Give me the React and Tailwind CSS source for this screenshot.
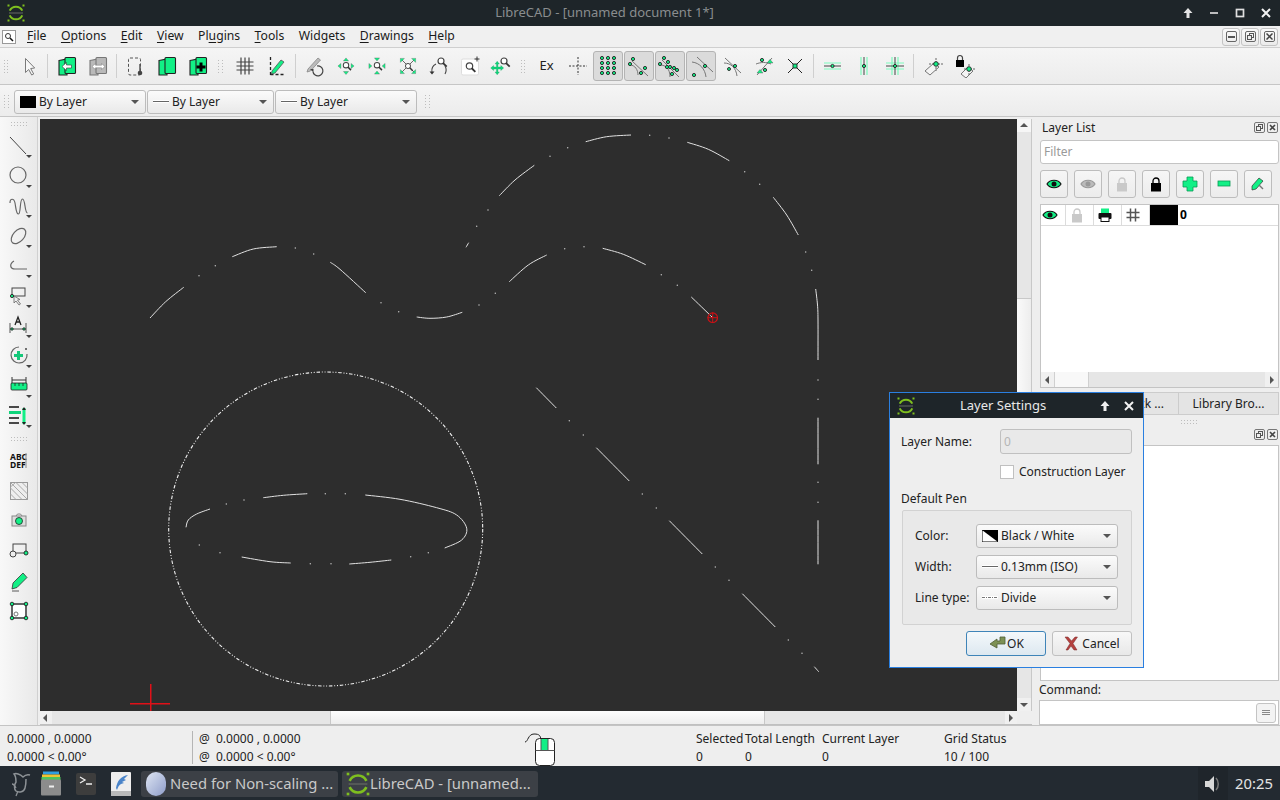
import React from "react";

const G = "#12f086";

function Ico({ s = 24, children }) {
  return (
    <svg width={s} height={s} viewBox="0 0 24 24" fill="none" className="block shrink-0">
      {children}
    </svg>
  );
}

const Dot = ({ x, y, r = 1.6 }) => <circle cx={x} cy={y} r={r} fill={G} stroke="#222" strokeWidth="0.9" />;

const Mag = ({ x = 12, y = 10, r = 3.2 }) => (
  <g>
    <circle cx={x} cy={y} r={r} fill="#fff" stroke="#444" strokeWidth="1.2" />
    <path d={`M${x + r * 0.7} ${y + r * 0.7}l3.6 3.6`} stroke="#333" strokeWidth="1.8" />
  </g>
);

const Pages = ({ fill = G, line = "#222", children }) => (
  <Ico>
    <path d="M4 6.5l8 -1.500v16l-8 0z" fill={fill} stroke={line} strokeWidth="1.1" />
    <rect x="10" y="3.5" width="10.5" height="16" rx="1" fill={fill} stroke={line} strokeWidth="1.1" />
    {children}
  </Ico>
);

const Logo = ({ s = 18 }) => (
  <svg width={s} height={s} viewBox="0 0 18 18" fill="none" className="block shrink-0">
    <path d="M2.7 6.6A7 7 0 0 1 15.3 6.6" stroke="#7fbf1f" strokeWidth="2" />
    <path d="M2.7 11.4A7 7 0 0 0 15.3 11.4" stroke="#7fbf1f" strokeWidth="2" />
    <path d="M2 9h14" stroke="#5b5f5c" strokeWidth="1.2" />
    <rect x="0.5" y="0.5" width="2" height="2" fill="#7fbf1f" />
    <rect x="15.5" y="0.5" width="2" height="2" fill="#7fbf1f" />
    <rect x="0.5" y="15.5" width="2" height="2" fill="#7fbf1f" />
    <rect x="15.5" y="15.5" width="2" height="2" fill="#7fbf1f" />
  </svg>
);

const ARROW = { fill: G, stroke: "#555", strokeWidth: 0.4 };

const TOP = {
  select: <Ico><path d="M8.5 4.5v14l3.2 -3l3 5.500l2 -1l-3 -5.500l4 -.5z" fill="#f6f6f6" stroke="#7a7a7a" /></Ico>,
  prev: <Pages><path d="M7 12.500l4.500 -4v2.500h5v3h-5v2.500z" fill="#fff" stroke="#333" strokeWidth="0.6" /></Pages>,
  next: <Pages fill="#b9b9b9" line="#777"><path d="M6 12.500l3.500 -3v1.700h6v-1.700l3.500 3l-3.500 3v-1.700h-6v1.700z" fill="#fff" stroke="#777" strokeWidth="0.5" /></Pages>,
  dashed: <Ico><rect x="4.5" y="4" width="12" height="17" rx="1.5" stroke="#555" strokeDasharray="3 2" /><path d="M16 10v7" stroke="#555" strokeWidth="1.5" /><circle cx="16" cy="19" r="2.3" fill="#444" /></Ico>,
  pages: <Pages />,
  plus: <Pages><path d="M13.500 8.500h3v3h3v3h-3v3h-3v-3h-3v-3h3z" fill="#000" /></Pages>,
  grid: <Ico><path d="M8 3.500v17M12 3.500v17M16 3.500v17M3.500 8h17M3.500 12h17M3.500 16h17" stroke="#444" strokeWidth="1.2" /></Ico>,
  ortho: <Ico><path d="M6.500 3v18M6.500 20.500h15" stroke="#222" strokeWidth="1.3" strokeDasharray="3 2" /><path d="M8 17l9 -11l3 2l-9 11l-3.500 1z" fill={G} stroke="#555" strokeWidth="0.8" /></Ico>,
  undoPen: <Ico><path d="M5 15l10 -11l2.500 2l-10 11l-3.500 1z" fill="#bbb" stroke="#888" strokeWidth="0.8" /><path d="M10 18a5 5 0 1 0 4 -6" stroke="#444" strokeWidth="1.2" /><path d="M7 15l3.500 0v3.500z" fill="#444" /></Ico>,
  zoomIn: <Ico><g transform="translate(1.8 1.8) scale(0.85)"><Mag x={12} y={11} /><path d="M9 6l3 -3.500l3 3.500zM9 18.500l3 3.500l3 -3.500zM6 9l-3.500 3l3.500 3zM18 9l3.500 3l-3.500 3z" {...ARROW} /></g></Ico>,
  zoomOut: <Ico><g transform="translate(1.8 1.8) scale(0.85)"><Mag x={12} y={11} /><path d="M9 2.500l3 3.500l3 -3.500zM9 21.500l3 -3.500l3 3.500zM2.500 9l3.500 3l-3.500 3zM21.500 9l-3.500 3l3.500 3z" {...ARROW} /></g></Ico>,
  zoomAuto: <Ico><g transform="translate(2.4 2.4) scale(0.8)"><path d="M3 3l18 18M21 3L3 21" stroke="#444" /><Mag x={12} y={12} /><path d="M2.500 2.500h5l-5 5zM21.500 2.500h-5l5 5zM2.500 21.500h5l-5 -5zM21.500 21.500h-5l5 -5z" {...ARROW} /></g></Ico>,
  zoomPrev: <Ico><Mag x={14} y={7} r={3} /><path d="M5 18a7.500 7.500 0 0 1 4 -8M18 12a8 8 0 0 1 0 8" stroke="#444" strokeWidth="1.1" /><path d="M2.500 17.500h5l-2.500 3z" fill="#333" /></Ico>,
  zoomWin: <Ico><rect x="3.5" y="5" width="17" height="16" rx="1.5" fill="#fff" stroke="#ddd" /><Mag x={11.5} y={12} /><path d="M19 2.500v5M16.500 5h5" stroke="#333" /></Ico>,
  zoomPan: <Ico><g transform="translate(1 5) scale(0.72)"><path d="M10 3l3 4h-2v4h4v-2l4 3.500l-4 3.500v-2h-4v4h2l-3 4l-3 -4h2v-4h-4v2l-4 -3.500l4 -3.500v2h4v-4h-2z" fill="#10d47a" stroke="#0a9a56" strokeWidth="0.4" /></g><Mag x={15} y={7} r={3} /></Ico>,
  cross: <Ico><path d="M12 3v18M3 12h18" stroke="#333" strokeDasharray="2 1.500" /></Ico>,
  gridSnap: <Ico>{[6, 12, 18].map((x) => [4, 9, 14, 19].map((y) => <Dot key={x + "-" + y} x={x} y={y} />))}</Ico>,
  endSnap: <Ico><path d="M5 7l16 15M3 11c5 0 8 5 8 10" stroke="#777" /><Dot x={6} y={5} /><Dot x={3} y={10} /><Dot x={18} y={14} /><Dot x={14} y={19} /></Ico>,
  entSnap: <Ico><path d="M4 6l17 17M2 11c6 0 10 4 10 12" stroke="#777" /><Dot x={6} y={4} /><Dot x={2} y={10} /><Dot x={10} y={8} /><Dot x={12} y={13} /><Dot x={9} y={13} /><Dot x={16} y={14} /><Dot x={19} y={16} /><Dot x={14} y={20} /></Ico>,
  tanSnap: <Ico><path d="M8 3l16 15M3 8c8 1 13 7 14 15" stroke="#777" /><Dot x={16} y={12} /><Dot x={5} y={21} /></Ico>,
  midSnap: <Ico><path d="M4 4l16 15M3 9c7 0 12 5 13 13" stroke="#777" /><Dot x={14} y={12} /><Dot x={8} y={15} r={1.5} /></Ico>,
  distSnap: <Ico><path d="M20 4L5 21M4 10c5 -2 10 -2 15 0" stroke="#777" /><Dot x={10} y={6} /><path d="M15 9l3 -3.500l3 3.500z" {...ARROW} /><Dot x={13} y={16} /><path d="M5 19l3 -3.500l3 3.500z" {...ARROW} /></Ico>,
  x: <Ico><path d="M5 5l14 14M19 5L5 19" stroke="#222" /><rect x="10" y="10" width="4" height="4" fill={G} stroke="#222" strokeWidth="0.9" /></Ico>,
  horiz: <Ico><path d="M3 9h17M3 15h17" stroke="#7dfbbd" strokeWidth="1.2" /><path d="M3 12h17" stroke="#444" /><Dot x={11.5} y={12} /></Ico>,
  vert: <Ico><path d="M9 3v18M15 3v18" stroke="#7dfbbd" strokeWidth="1.2" /><path d="M12 3v18" stroke="#444" /><Dot x={12} y={12} /></Ico>,
  both: <Ico><path d="M9 3v18M15 3v18M3 9h18M3 15h18" stroke="#7dfbbd" strokeWidth="1.2" /><path d="M12 3v18M3 12h18" stroke="#444" /><Dot x={12} y={12} /></Ico>,
  rel: <Ico><path d="M4 17l9 -8l5 4l-9 8z" fill="#f4f4f4" stroke="#777" /><path d="M8 10h14M15 4v13" stroke="#666" strokeDasharray="2 1" /><Dot x={15} y={10} r={2.3} /></Ico>,
  lock: <Ico><rect x="4" y="6" width="8" height="7" fill="#000" /><path d="M5.500 6V4a2.500 2.500 0 0 1 5 0v2" stroke="#444" strokeWidth="1.2" /><path d="M9 20l7 -7l5 4l-7 7z" fill="#f4f4f4" stroke="#777" /><path d="M12 15h11M17 10v11" stroke="#666" strokeDasharray="2 1" /><Dot x={17} y={15} r={2.3} /></Ico>,
};

const LEFT = {
  line: <path d="M3 3l16 17" stroke="#444" />,
  circle: <circle cx="11" cy="11" r="8" stroke="#666" strokeWidth="1.2" />,
  spline: <path d="M3 9c0 -5 4 -5 5 0s1 11 3.500 11s1 -15 4 -15s2 14 5 14" stroke="#666" strokeWidth="1.2" />,
  ellipse: <ellipse cx="11.5" cy="12" rx="5.5" ry="9" transform="rotate(42 11.5 12)" stroke="#666" strokeWidth="1.2" />,
  poly: <path d="M7 7C2 10 3 15 8 15h12" stroke="#666" strokeWidth="1.2" />,
  sel: (
    <g>
      <rect x="5" y="4" width="13" height="8" stroke="#444" />
      <path d="M7 12v7l2 -2l3 4l1.500 -1l-3 -4l2.500 -.5z" fill="#eee" stroke="#666" strokeWidth="0.8" />
      <Dot x={5} y={12} />
    </g>
  ),
  dim: (
    <g>
      <path d="M8 11l3 -8l3 8M9 8h4" stroke="#222" strokeWidth="1.3" />
      <path d="M3 9v10M19 9v10M3 15h16" stroke="#555" />
      <Dot x={5} y={15} r={1.2} />
      <Dot x={17} y={15} r={1.2} />
    </g>
  ),
  mod: (
    <g>
      <path d="M12 3a8 8 0 1 0 8 7" stroke="#666" strokeWidth="1.2" />
      <path d="M10 7h3v3h3v3h-3v3h-3v-3H7v-3h3z" fill="#14c87a" />
      <circle cx="19" cy="5" r="1" fill="#444" />
    </g>
  ),
  info: (
    <g>
      <path d="M5 3v7M19 3v7M5 6h14" stroke="#333" />
      <rect x="4" y="9" width="16" height="7" rx="1" fill={G} stroke="#222" strokeWidth="0.8" />
      <path d="M8 9v3M12 9v3M16 9v3" stroke="#222" strokeWidth="0.8" />
    </g>
  ),
  layer: (
    <g>
      <path d="M2 3h10M2 14h10M2 19h10" stroke="#111" strokeWidth="1.6" />
      <rect x="2" y="7" width="12" height="3" fill="#0ed47a" />
      <path d="M17 4v16" stroke={G} strokeWidth="3" />
      <path d="M15 6l2 -3l2 3zM15 18l2 3l2 -3z" fill="#222" />
    </g>
  ),
  text: (
    <g>
      <text fontFamily="'Noto Sans',sans-serif" fontWeight="700" fontSize="8.5" fill="#111">
        <tspan x="3" y="11">ABC</tspan>
        <tspan x="3" y="18.5">DEF</tspan>
      </text>
      <path d="M19 4v15" stroke="#999" strokeWidth="1.2" />
    </g>
  ),
  hatch: (
    <g>
      <rect x="3.5" y="3.5" width="17" height="17" fill="#eee" stroke="#999" />
      <path d="M3.500 8l5 -4.500M3.500 3.500l17 17M9 3.500l11.500 11.500M3.500 9l11.500 11.500M15 3.500l5.500 5.500M3.500 15l5.500 5.500" stroke="#aaa" />
    </g>
  ),
  image: (
    <g>
      <rect x="5" y="7" width="14" height="10" fill="#ddd" stroke="#888" />
      <path d="M9 7l1.500 -2h3L15 7" stroke="#888" />
      <circle cx="12" cy="12" r="3.5" fill={G} stroke="#222" strokeWidth="0.8" />
    </g>
  ),
  block: (
    <g>
      <rect x="6" y="5" width="13" height="9" stroke="#444" />
      <circle cx="6" cy="15" r="3" fill="#eee" stroke="#444" />
      <Dot x={19} y={14} r={2} />
    </g>
  ),
  pen: <path d="M6 14L16 4l4 4.500L10 18.500l-5 1.500zM5 22h7" fill={G} stroke="#333" strokeWidth="0.8" />,
  polyline: (
    <g>
      <rect x="5" y="5" width="14" height="14" fill="#fff" stroke="#666" strokeWidth="2" />
      <circle cx="9" cy="15" r="2" stroke="#777" />
      <Dot x={5} y={5} r={1.8} />
      <Dot x={19} y={5} r={1.8} />
      <Dot x={5} y={19} r={1.8} />
      <Dot x={19} y={19} r={1.8} />
    </g>
  ),
};

const Handle = ({ vertical }) => (
  <div
    className={
      vertical
        ? "grid grid-cols-2 gap-y-[2px] gap-x-[1px] w-[6px]"
        : "grid grid-cols-6 gap-x-[2px] gap-y-[2px] w-[16px]"
    }
  >
    {Array.from({ length: vertical ? 10 : 12 }).map((_, i) => (
      <span key={i} className="w-px h-px bg-[#bdbdbd]" />
    ))}
  </div>
);

const Sep = ({ w }) => (
  <div className={`${w} flex justify-center`}>
    <div className="w-px h-[24px] bg-[#cfcfcf]" />
  </div>
);

const Btn = ({ icon, active, children }) =>
  active ? (
    <div className="w-[30px] h-[30px] mr-px flex items-center justify-center rounded-[3px] border border-[#b4b4b4] bg-[#dbdbdb]">{icon}</div>
  ) : (
    <div className="w-[31px] h-[30px] flex items-center justify-center">{icon || children}</div>
  );

function Combo({ swatch, label, className }) {
  return (
    <div className={`h-[24px] flex items-center rounded-[3px] border border-[#bcbcbc] bg-gradient-to-b from-[#fbfbfb] to-[#e9e9e9] ${className}`}>
      {swatch}
      <span className="flex-1 truncate">{label}</span>
      <span className="mr-[6px] w-0 h-0 border-x-[4px] border-x-transparent border-t-[4px] border-t-[#555]" />
    </div>
  );
}

const PenLine = () => (
  <span className="ml-[5px] mr-[3px] w-[16px] h-[3px] bg-white flex items-center">
    <span className="w-full h-px bg-[#666]" />
  </span>
);

function FloatIcon() {
  return (
    <svg width="7" height="7" viewBox="0 0 7 7" fill="none">
      <rect x="2.5" y="0.5" width="4" height="4" stroke="#555" />
      <rect x="0.5" y="2.5" width="4" height="4" fill="#eee" stroke="#555" />
    </svg>
  );
}

function DockBtns() {
  return (
    <div className="flex gap-[2px]">
      <span className="w-[11px] h-[11px] rounded-[2px] border border-[#777] flex items-center justify-center"><FloatIcon /></span>
      <span className="w-[11px] h-[11px] rounded-[2px] border border-[#777] flex items-center justify-center">
        <svg width="7" height="7" viewBox="0 0 7 7"><path d="M1 1l5 5M6 1L1 6" stroke="#444" strokeWidth="1.6" /></svg>
      </span>
    </div>
  );
}

const MdiBtn = ({ children }) => (
  <div className="w-[18px] h-[18px] rounded-[3px] border border-[#c4c4c4] bg-gradient-to-b from-[#fafafa] to-[#ebebeb] flex items-center justify-center">
    <span className="w-[11px] h-[11px] rounded-[2px] border border-[#666] flex items-center justify-center">{children}</span>
  </div>
);

const Eye = ({ c = G, line = "#111" }) => (
  <svg width="16" height="12" viewBox="0 0 16 12"><path d="M1 6c3 -5 11 -5 14 0c-3 5 -11 5 -14 0z" fill={c} stroke={line} strokeWidth="1.2" /><circle cx="8" cy="6" r="2.5" fill={line} /></svg>
);
const Lock = ({ c = "#c9c9c9" }) => (
  <svg width="12" height="15" viewBox="0 0 12 15"><rect x="1" y="6" width="10" height="8.5" fill={c} /><path d="M3 6V4a3 3 0 0 1 6 0v2" stroke={c} strokeWidth="1.3" fill="none" /></svg>
);

const DockBtn = ({ children }) => (
  <div className="w-[28px] h-[28px] rounded-[3px] border border-[#bdbdbd] bg-gradient-to-b from-[#f6f6f6] to-[#ececec] flex items-center justify-center">{children}</div>
);

const ArrowBox = ({ dir }) => {
  const d = { up: "M1 6l4 -4l4 4z", down: "M1 3l4 4l4 -4z", left: "M6 1L2 5l4 4z", right: "M3 1l4 4l-4 4z" }[dir];
  return <svg width="10" height="10" viewBox="0 0 10 10" className="block"><path d={d} fill="#555" /></svg>;
};

const CURVES = [
  [150, 318, 165.7, 301.7, 183.7, 287.3],
  [232.3, 256.7, 253.3, 249, 276.7, 246.7],
  [330.3, 262.3, 340, 269.3, 365.7, 292.7],
  [416.7, 317, 430, 318.3, 446.7, 317, 462.3, 312.3],
  [509.3, 281.7, 528.3, 265, 546.7, 255],
  [602.7, 248.3, 623.3, 254.3, 645.7, 264.7],
  [691.3, 297, 712.3, 317.3],
  [466, 247.3, 468.7, 242.7],
  [499.3, 195.7, 515, 180, 534.3, 165.3],
  [585.7, 141.7, 606.7, 136.7, 631, 135],
  [687.3, 142.3, 708.3, 149.3, 729.3, 160.7],
  [773.3, 197.3, 786.7, 215, 798.3, 235],
  [815.7, 289, 817.5, 305, 818, 320, 818, 360],
  [818, 417.7, 818, 464.3],
  [818, 520.3, 818, 564.3],
  [536.3, 387.7, 556.3, 408],
  [596.3, 447.7, 629.3, 481],
  [669.3, 520.7, 702.3, 554],
  [742.3, 593.7, 775.3, 627],
  [814.3, 666.7, 818.7, 671.7],
  [186, 527.3, 188.3, 520, 196.7, 514, 210, 509],
  [263.3, 497.7, 283.3, 495.3, 307.3, 493.7],
  [365.3, 495, 400, 499.3, 436.7, 507.7, 456.7, 515, 466.7, 528.3, 461.7, 540, 444.7, 548],
  [391.3, 560, 370, 562.3, 349.3, 564],
  [290.7, 563, 270, 561.7, 241.7, 557],
];

const DOTS = [
  [199, 275.7], [215.3, 265.7], [295.3, 248], [313.7, 254], [381, 302.7], [398.7, 311.7],
  [479, 305], [495.3, 293.3], [564.7, 248.7], [584, 246.7], [661.3, 274.7], [677.3, 285.3],
  [476.7, 226.3], [488, 210], [550, 156.3], [567.7, 147.7], [649.7, 135.3], [669, 138],
  [744.7, 171.7], [759.7, 184.3], [805.7, 252], [811.7, 270.3], [818, 380], [818, 399.3],
  [818, 482.3], [818, 502.3], [569.3, 420.7], [583.3, 435], [642.3, 494], [656.3, 508],
  [715.3, 567], [729, 580.3], [788.3, 640], [802, 653.3], [226.3, 504], [244, 500], [325.3, 493.7],
  [345.3, 493.7], [428.3, 552.7], [410.7, 556.7], [331, 563.7], [310.3, 563.7], [220, 552.7], [199.3, 545],
];

// catmull-rom through the measured points, so the arcs don't look faceted
function smooth(c) {
  const p = [];
  for (let i = 0; i < c.length; i += 2) p.push([c[i], c[i + 1]]);
  let d = `M${p[0][0]} ${p[0][1]}`;
  for (let i = 0; i < p.length - 1; i++) {
    const a = p[i - 1] || p[i];
    const b = p[i];
    const e = p[i + 1];
    const f = p[i + 2] || e;
    d += `C${b[0] + (e[0] - a[0]) / 6} ${b[1] + (e[1] - a[1]) / 6} ${e[0] - (f[0] - b[0]) / 6} ${e[1] - (f[1] - b[1]) / 6} ${e[0]} ${e[1]}`;
  }
  return d;
}

function Drawing() {
  return (
    <svg viewBox="40 119 977 592" className="block w-full h-full" fill="none">
      {CURVES.map((c) => (
        <path key={c.join()} d={smooth(c)} stroke="#e2e2e2" strokeWidth="1" />
      ))}
      {DOTS.map(([x, y]) => (
        <circle key={x + "," + y} cx={x} cy={y} r="0.75" fill="#bdbdbd" />
      ))}
      <circle cx="325.7" cy="529" r="157" stroke="#f2f2f2" strokeWidth="1.1" strokeDasharray="3.5 1.8 1 1.8 1 1.8" />
      <rect x="130" y="703" width="40" height="1.5" fill="#e01018" />
      <rect x="150" y="684" width="1.5" height="27" fill="#e01018" />
      <circle cx="712.7" cy="317.7" r="4.8" stroke="#d01015" strokeWidth="1.2" />
      <path d="M707.500 317.700h10.500M712.700 312.500v10.500" stroke="#d01015" />
    </svg>
  );
}

function Menu({ pre = "", u, post }) {
  return (
    <span>
      {pre}
      {u && <span className="underline underline-offset-2">{u}</span>}
      {post}
    </span>
  );
}

function WindowBar() {
  return (
    <div className="h-[26px] bg-[#1e2529] flex items-center relative shrink-0">
      <div className="ml-[7px]"><Logo /></div>
      <div className="flex-1 text-center text-[13px] text-[#8a8d8f] mr-[96px]">LibreCAD - [unnamed document 1*]</div>
      <div className="absolute right-[8px] top-[7px] flex items-center gap-[14px]">
        <svg width="12" height="12" viewBox="0 0 12 12"><path d="M6 1L1.500 6H4.500V11H7.500V6H10.500z" fill="#e4e4e4" /></svg>
        <svg width="12" height="12" viewBox="0 0 12 12"><path d="M2 6h8" stroke="#cfcfcf" strokeWidth="1.8" /></svg>
        <svg width="12" height="12" viewBox="0 0 12 12"><rect x="2.5" y="2.5" width="7" height="7" stroke="#dfdfdf" strokeWidth="1.7" fill="none" /></svg>
        <svg width="12" height="12" viewBox="0 0 12 12"><path d="M2 2l8 8M10 2l-8 8" stroke="#f2f2f2" strokeWidth="2" /></svg>
      </div>
    </div>
  );
}

function MenuBar() {
  return (
    <div className="h-[22px] shrink-0 bg-[#f0f0f0] border-b border-[#cfcfcf] flex items-center text-[12.2px] text-[#1a1a1a]">
      <div className="ml-[2px] w-[14px] h-[14px] border border-[#999] bg-white flex items-center justify-center">
        <svg width="10" height="10" viewBox="0 0 10 10"><circle cx="4" cy="4" r="2.5" stroke="#333" fill="none" /><path d="M6 6l3 3" stroke="#111" strokeWidth="1.5" /></svg>
      </div>
      <div className="ml-[11px] flex gap-[14.45px]">
        <Menu u="F" post="ile" />
        <Menu u="O" post="ptions" />
        <Menu u="E" post="dit" />
        <Menu u="V" post="iew" />
        <Menu pre="Pl" u="u" post="gins" />
        <Menu u="T" post="ools" />
        <Menu post="Widgets" />
        <Menu u="D" post="rawings" />
        <Menu u="H" post="elp" />
      </div>
      <div className="ml-auto mr-[2px] flex gap-px">
        <MdiBtn><span className="w-[7px] h-[2px] bg-[#555]" /></MdiBtn>
        <MdiBtn><FloatIcon /></MdiBtn>
        <MdiBtn>
          <svg width="7" height="7" viewBox="0 0 7 7"><path d="M0.500 0.500l6 6M6.500 0.500l-6 6" stroke="#444" strokeWidth="1.5" /></svg>
        </MdiBtn>
      </div>
    </div>
  );
}

function MainToolbar() {
  return (
    <div className="h-[37px] shrink-0 flex items-center border-b border-[#c6c6c6] bg-gradient-to-b from-[#f5f5f5] to-[#ececec]">
      <div className="w-[13px] flex justify-center"><Handle vertical /></div>
      <Btn icon={TOP.select} />
      <Sep w="w-[7px]" />
      <Btn icon={TOP.prev} />
      <Btn icon={TOP.next} />
      <Sep w="w-[7px]" />
      <Btn icon={TOP.dashed} />
      <Btn icon={TOP.pages} />
      <Btn icon={TOP.plus} />
      <div className="w-[16px] flex justify-center"><Handle vertical /></div>
      <Btn icon={TOP.grid} />
      <Btn icon={TOP.ortho} />
      <Sep w="w-[8px]" />
      <Btn icon={TOP.undoPen} />
      <Btn icon={TOP.zoomIn} />
      <Btn icon={TOP.zoomOut} />
      <Btn icon={TOP.zoomAuto} />
      <Btn icon={TOP.zoomPrev} />
      <Btn icon={TOP.zoomWin} />
      <Btn icon={TOP.zoomPan} />
      <div className="w-[15px] flex justify-center"><Handle vertical /></div>
      <Btn><span className="text-[13px] text-[#222]">Ex</span></Btn>
      <Btn icon={TOP.cross} />
      <Btn active icon={TOP.gridSnap} />
      <Btn active icon={TOP.endSnap} />
      <Btn active icon={TOP.entSnap} />
      <Btn active icon={TOP.tanSnap} />
      <Btn icon={TOP.midSnap} />
      <Btn icon={TOP.distSnap} />
      <Btn icon={TOP.x} />
      <Sep w="w-[7px]" />
      <Btn icon={TOP.horiz} />
      <Btn icon={TOP.vert} />
      <Btn icon={TOP.both} />
      <Sep w="w-[7px]" />
      <Btn icon={TOP.rel} />
      <Btn icon={TOP.lock} />
    </div>
  );
}

function PenToolbar() {
  return (
    <div className="h-[32px] shrink-0 flex items-center pt-[2px] border-b border-[#c6c6c6] bg-gradient-to-b from-[#f5f5f5] to-[#ececec] text-[12px] text-[#222]">
      <div className="w-[14px] flex justify-center"><Handle vertical /></div>
      <Combo className="w-[132px] mr-px" label="By Layer" swatch={<span className="ml-[5px] mr-[3px] w-[16px] h-[12px] bg-black" />} />
      <Combo className="w-[127px] mr-px" label="By Layer" swatch={<PenLine />} />
      <Combo className="w-[142px]" label="By Layer" swatch={<PenLine />} />
      <div className="w-[22px] flex justify-center"><Handle vertical /></div>
    </div>
  );
}

function LeftTools() {
  const items = ["line", "circle", "spline", "ellipse", "poly", "sel", "dim", "mod", "info", "layer"];
  const rest = ["text", "hatch", "image", "block", "pen", "polyline"];
  return (
    <div className="w-[38px] shrink-0 flex flex-col items-center bg-gradient-to-r from-[#f8f8f8] to-[#e9e9e9] border-r border-[#d0d0d0]">
      <div className="h-[14px] flex items-center"><Handle /></div>
      {items.map((k) => (
        <div key={k} className="h-[30px] w-full flex items-center justify-center relative">
          <Ico>{LEFT[k]}</Ico>
          <span className="absolute right-[5px] bottom-[3px] w-0 h-0 border-x-[3px] border-x-transparent border-t-[3px] border-t-[#444]" />
        </div>
      ))}
      <div className="h-[15px] flex items-center"><Handle /></div>
      {rest.map((k) => (
        <div key={k} className="h-[30px] w-full flex items-center justify-center">
          <Ico>{LEFT[k]}</Ico>
        </div>
      ))}
    </div>
  );
}

function CenterArea() {
  return (
    <div className="w-[992px] shrink-0 ml-[2px] flex flex-col">
      <div className="flex-1 min-h-0 flex pt-[2px]">
        <div className="w-[977px] h-[592px] bg-[#2d2d2d]"><Drawing /></div>
        <div className="flex-1 flex flex-col bg-[#e6e6e6] border-r border-[#c8c8c8]">
          <div className="h-[13px] bg-[#f6f6f6] flex items-center justify-center"><ArrowBox dir="up" /></div>
          <div className="h-[166px]" />
          <div className="h-[300px] bg-gradient-to-r from-[#fafafa] to-[#ededed] border-y border-[#c8c8c8]" />
          <div className="flex-1" />
          <div className="h-[13px] bg-[#f0f0f0] flex items-center justify-center"><ArrowBox dir="down" /></div>
        </div>
      </div>
      <div className="h-[14px] shrink-0 flex bg-[#e6e6e6] border-b border-[#c0c0c0]">
        <div className="w-[12px] bg-[#f0f0f0] flex items-center justify-center"><ArrowBox dir="left" /></div>
        <div className="w-[278px]" />
        <div className="w-[435px] bg-gradient-to-b from-[#fdfdfd] to-[#eeeeee] border-x border-[#c8c8c8]" />
        <div className="flex-1" />
        <div className="w-[12px] bg-[#f0f0f0] flex items-center justify-center"><ArrowBox dir="right" /></div>
        <div className="w-[15px] bg-[#eeeeee]" />
      </div>
    </div>
  );
}

function RightDock() {
  return (
    <div className="flex-1 flex flex-col pl-[7px] pr-px text-[12px] text-[#222] bg-[#eeeeee]">
      <div className="h-[21px] flex items-center justify-between pl-[3px] pr-[1px]">
        <span>Layer List</span>
        <DockBtns />
      </div>
      <div className="h-[24px] mt-[2px] ml-px rounded-[3px] border border-[#c4c4c4] bg-white px-[3px] flex items-center text-[#9a9a9a]">Filter</div>
      <div className="mt-[6px] ml-px flex gap-[6px]">
        <DockBtn><Eye /></DockBtn>
        <DockBtn><Eye c="#bbb" line="#999" /></DockBtn>
        <DockBtn><Lock /></DockBtn>
        <DockBtn><Lock c="#000" /></DockBtn>
        <DockBtn><svg width="16" height="16" viewBox="0 0 16 16"><path d="M5 1h6v4h4v6h-4v4H5v-4H1V5h4z" fill={G} stroke="#0a9a56" strokeWidth="0.8" /></svg></DockBtn>
        <DockBtn><svg width="16" height="8" viewBox="0 0 16 8"><rect x="2" y="1" width="12" height="5" fill={G} stroke="#0a9a56" strokeWidth="0.8" /></svg></DockBtn>
        <DockBtn><svg width="16" height="16" viewBox="0 0 16 16"><path d="M2 10L9 2l4 3l-7 8l-4 1z" fill={G} stroke="#333" strokeWidth="0.7" /><path d="M9 9l4 4" stroke="#777" strokeWidth="1.5" /></svg></DockBtn>
      </div>
      <div className="mt-[6px] ml-px h-[184px] border border-[#c4c4c4] bg-white flex flex-col">
        <div className="h-[21px] flex items-center border-b border-[#dcdcdc]">
          <div className="w-[25px] h-full flex items-center justify-center pr-[7px] border-r border-[#dcdcdc]"><Eye /></div>
          <div className="w-[28px] h-full flex items-center justify-center pr-[6px] border-r border-[#dcdcdc]"><Lock /></div>
          <div className="w-[28px] h-full flex items-center justify-center pr-[6px] border-r border-[#dcdcdc]">
            <svg width="14" height="14" viewBox="0 0 14 14"><rect x="3" y="0.5" width="8" height="5" fill={G} /><rect x="0.5" y="5" width="13" height="6" rx="1" fill="#111" /><rect x="3" y="9" width="8" height="4.5" fill="#fff" stroke="#111" /></svg>
          </div>
          <div className="w-[28px] h-full flex items-center justify-center pr-[6px] border-r border-[#dcdcdc]">
            <svg width="14" height="14" viewBox="0 0 14 14"><path d="M4.500 0.500v13M9.500 0.500v13M0.500 4.500h13M0.500 9.500h13" stroke="#555" strokeWidth="1.5" /></svg>
          </div>
          <div className="w-[28px] h-full bg-black" />
          <span className="ml-[2px] font-bold text-black">0</span>
        </div>
        <div className="flex-1" />
        <div className="h-[15px] flex items-center bg-[#e6e6e6]">
          <div className="w-[13px] bg-[#f0f0f0] h-full flex items-center justify-center"><ArrowBox dir="left" /></div>
          <div className="w-[35px] h-full bg-[#f8f8f8] border-x border-[#d0d0d0]" />
          <div className="flex-1" />
          <div className="w-[13px] bg-[#f0f0f0] h-full flex items-center justify-center"><ArrowBox dir="right" /></div>
        </div>
      </div>
      <div className="h-[23px] mt-[4px] flex justify-end items-stretch">
        <div className="w-[70px] pr-[14px] flex items-center justify-end bg-[#e4e4e4] border border-[#cccccc]">Block ...</div>
        <div className="w-[100px] flex items-center justify-center bg-[#e4e4e4] border border-l-0 border-[#cccccc]">Library Bro...</div>
      </div>
      <div className="h-[13px] flex items-center justify-center pl-[60px]"><Handle /></div>
      <div className="h-[13px] flex items-center justify-end pr-[1px]"><DockBtns /></div>
      <div className="h-[236px] mt-[4px] ml-px border border-[#c4c4c4] bg-white" />
      <div className="h-[18px] flex items-center">Command:</div>
      <div className="h-[25px] mt-px border border-[#c4c4c4] bg-white flex items-center justify-end pr-[2px]">
        <div className="w-[20px] h-[20px] rounded-[3px] border border-[#c4c4c4] bg-[#f3f3f3] flex flex-col items-center justify-center gap-px">
          <span className="w-[8px] h-px bg-[#888]" />
          <span className="w-[8px] h-px bg-[#888]" />
          <span className="w-[8px] h-px bg-[#888]" />
        </div>
      </div>
    </div>
  );
}

function StatusBar() {
  return (
    <div className="h-[41px] shrink-0 bg-[#eeeeee] border-t border-[#c4c4c4] flex items-center pt-[3px] text-[12px] leading-[18px] text-[#222]">
      <div className="w-[192px] pl-[7px]">
        <div>0.0000 , 0.0000</div>
        <div>0.0000 &lt; 0.00°</div>
      </div>
      <div className="w-px h-[33px] bg-[#b5b5b5]" />
      <div className="ml-[6px] w-[326px]">
        <div className="flex"><span className="w-[17px]">@</span>0.0000 , 0.0000</div>
        <div className="flex"><span className="w-[17px]">@</span>0.0000 &lt; 0.00°</div>
      </div>
      <svg width="32" height="34" viewBox="0 0 32 34" className="shrink-0 -ml-[1px] mt-[3px]">
        <path d="M1 10c3 0 3 -8 9 -8s6 2 7 5" stroke="#222" fill="none" />
        <rect x="11.5" y="6.5" width="19" height="27" rx="4" fill="#fff" stroke="#222" />
        <path d="M11.500 18.500h19" stroke="#555" />
        <rect x="17" y="7" width="7" height="11" fill={G} />
        <path d="M17 7v11M24 7v11" stroke="#555" />
      </svg>
      <div className="ml-[140px] w-[49px]"><div>Selected</div><div>0</div></div>
      <div className="w-[77px]"><div>Total Length</div><div>0</div></div>
      <div className="w-[122px]"><div>Current Layer</div><div>0</div></div>
      <div><div>Grid Status</div><div>10 / 100</div></div>
    </div>
  );
}

function TaskBar() {
  return (
    <div className="flex-1 bg-[#232a31] flex items-center pt-px text-[14.8px] text-[#c9c9c9]">
      <div className="w-[41px] flex justify-center">
        <svg width="24" height="28" viewBox="0 0 24 28" fill="none">
          <path d="M21 5c-3 -1 -5 0 -7 2c-3 -3 -7 -4 -9 -3c2 2 2 5 2 8c-2 3 -2 7 0 9c3 2 8 1 9 -3c1 -3 1 -6 1 -9" stroke="#8d9296" strokeWidth="1.5" />
          <path d="M3 14c2 0 3 2 4 4M9 21l-2 5" stroke="#8d9296" strokeWidth="1.3" />
        </svg>
      </div>
      <div className="w-[35px] flex justify-start">
        <svg width="20" height="25" viewBox="0 0 20 25">
          <rect x="2" y="0.5" width="16" height="3" fill="#2f9ee0" />
          <rect x="1" y="3.5" width="18" height="3" fill="#f1c232" />
          <rect x="0.5" y="6" width="19" height="3" fill="#4fc35b" />
          <rect x="0" y="8.5" width="20" height="16" rx="1" fill="#8c8c8c" />
          <rect x="8" y="14.5" width="5" height="2" fill="#eee" />
        </svg>
      </div>
      <div className="w-[35px] flex justify-start">
        <div className="w-[20px] h-[22px] rounded-[2px] bg-[#3d3d3d] pl-[3px] pt-[3px]">
          <svg width="14" height="12" viewBox="0 0 14 12"><path d="M1 1l5 3l-5 3" stroke="#eee" fill="none" strokeWidth="1.3" /><path d="M7 8h6" stroke="#eee" strokeWidth="1.5" /></svg>
        </div>
      </div>
      <div className="w-[30px] flex justify-start">
        <svg width="20" height="24" viewBox="0 0 20 24">
          <rect width="20" height="24" rx="1" fill="#eeeeee" />
          <rect y="19" width="20" height="5" fill="#b9b9b9" />
          <path d="M17 3c-7 1 -11 6 -12 13l1 2c1 -3 2 -5 4 -6l3 -1l-2 -1l4 -2l-2 -1z" fill="#4a84c9" />
        </svg>
      </div>
      <div className="w-[197px] h-[26px] rounded-[3px] bg-[#3c4046] flex items-center pl-[5px] mr-[4px]">
        <span className="w-[20px] h-[24px] rounded-full bg-gradient-to-br from-[#dfe6f3] to-[#8f9dc9] mr-[4px] shrink-0" />
        <span className="whitespace-nowrap">Need for Non-scaling ...</span>
      </div>
      <div className="w-[196px] h-[26px] rounded-[3px] bg-[#3c4046] flex items-center pl-[4px]">
        <Logo s={24} />
        <span className="whitespace-nowrap">LibreCAD - [unnamed...</span>
      </div>
      <div className="ml-auto w-[30px] h-[33px] bg-[#1f252b] flex items-center justify-center">
        <svg width="18" height="20" viewBox="0 0 18 20">
          <path d="M1 7h4l5 -5v16l-5 -5H1z" fill="#d8d8d8" />
          <path d="M12 4c3 3 3 9 0 12" stroke="#777" strokeWidth="1.5" fill="none" />
        </svg>
      </div>
      <div className="w-[52px] text-center text-[#e4e4e4]">20:25</div>
    </div>
  );
}

function SmallCombo({ swatch, label }) {
  return <Combo className="w-[142px] ml-auto" swatch={swatch} label={label} />;
}

function LayerDialog() {
  return (
    <div className="absolute left-[889px] top-[392px] w-[255px] h-[276px] border border-[#2a7fe0] bg-[#eeeeee] flex flex-col text-[12px] text-[#222]">
      <div className="h-[25px] shrink-0 bg-[#1e2529] flex items-center relative">
        <div className="ml-[7px]"><Logo /></div>
        <div className="absolute left-[70px] text-[13px] text-[#e8e8e8]">Layer Settings</div>
        <div className="ml-auto mr-[8px] flex items-center gap-[12px]">
          <svg width="12" height="12" viewBox="0 0 12 12"><path d="M6 1L1.500 6H4.500V11H7.500V6H10.500z" fill="#f0f0f0" /></svg>
          <svg width="12" height="12" viewBox="0 0 12 12"><path d="M2 2l8 8M10 2l-8 8" stroke="#f2f2f2" strokeWidth="2" /></svg>
        </div>
      </div>
      <div className="px-[11px] flex-1 flex flex-col">
        <div className="mt-[11px] h-[25px] flex items-center">
          <span className="w-[99px]">Layer Name:</span>
          <div className="flex-1 h-full rounded-[3px] border border-[#c0c0c0] bg-[#e9e9e9] flex items-center pl-[3px] text-[#b5b5b5]">0</div>
        </div>
        <div className="mt-[10px] h-[16px] flex items-center pl-[99px]">
          <span className="w-[14px] h-[14px] border border-[#c0c0c0] bg-white mr-[5px]" />
          <span>Construction Layer</span>
        </div>
        <div className="mt-[10px] h-[18px] flex items-center">Default Pen</div>
        <div className="mt-[2px] ml-px h-[115px] rounded-[2px] border border-[#d2d2d2] bg-[#e9e9e9] pl-[12px] pr-[13px] pt-[12px] flex flex-col gap-[6px]">
          <div className="flex items-center h-[25px]">
            <span>Color:</span>
            <SmallCombo
              label="Black / White"
              swatch={
                <svg width="16" height="12" viewBox="0 0 16 12" className="ml-[5px] mr-[3px]">
                  <rect width="16" height="12" fill="#fff" stroke="#000" />
                  <path d="M0 0h16v12z" fill="#000" />
                </svg>
              }
            />
          </div>
          <div className="flex items-center h-[25px]">
            <span>Width:</span>
            <SmallCombo label="0.13mm (ISO)" swatch={<PenLine />} />
          </div>
          <div className="flex items-center h-[25px]">
            <span>Line type:</span>
            <SmallCombo
              label="Divide"
              swatch={
                <svg width="16" height="3" viewBox="0 0 16 3" className="ml-[5px] mr-[3px]">
                  <rect width="16" height="3" fill="#fff" />
                  <path d="M0 1.500h16" stroke="#777" strokeDasharray="3 1 1 1" />
                </svg>
              }
            />
          </div>
        </div>
        <div className="mt-[6px] h-[25px] flex justify-end gap-[6px]">
          <div className="w-[80px] rounded-[3px] border border-[#3f84b8] bg-gradient-to-b from-[#f4f8fb] to-[#dde8f0] flex items-center justify-center">
            <svg width="18" height="16" viewBox="0 0 18 16" className="mr-px">
              <path d="M12 1h5v7h-8v4L2 8l7 -5v2h3z" fill="#7d9155" stroke="#4f5d35" strokeWidth="0.8" />
            </svg>
            OK
          </div>
          <div className="w-[80px] rounded-[3px] border border-[#c0c0c0] bg-gradient-to-b from-[#f8f8f8] to-[#e8e8e8] flex items-center justify-center">
            <svg width="14" height="15" viewBox="0 0 14 15" className="mr-[4px]">
              <path d="M2 14L6 7.500L1 1h3l3.500 4L11 1h2.500L9 7.500L13 14h-3L7 10l-3 4z" fill="#b5413f" stroke="#7a2a2a" strokeWidth="0.5" />
            </svg>
            Cancel
          </div>
        </div>
      </div>
    </div>
  );
}

export default function App() {
  return (
    <div className="relative w-[1280px] h-[800px] overflow-hidden flex flex-col font-['Noto_Sans',sans-serif]">
      <WindowBar />
      <MenuBar />
      <MainToolbar />
      <PenToolbar />
      <div className="h-[608px] shrink-0 flex bg-[#eeeeee]">
        <LeftTools />
        <CenterArea />
        <RightDock />
      </div>
      <StatusBar />
      <TaskBar />
      <LayerDialog />
    </div>
  );
}
